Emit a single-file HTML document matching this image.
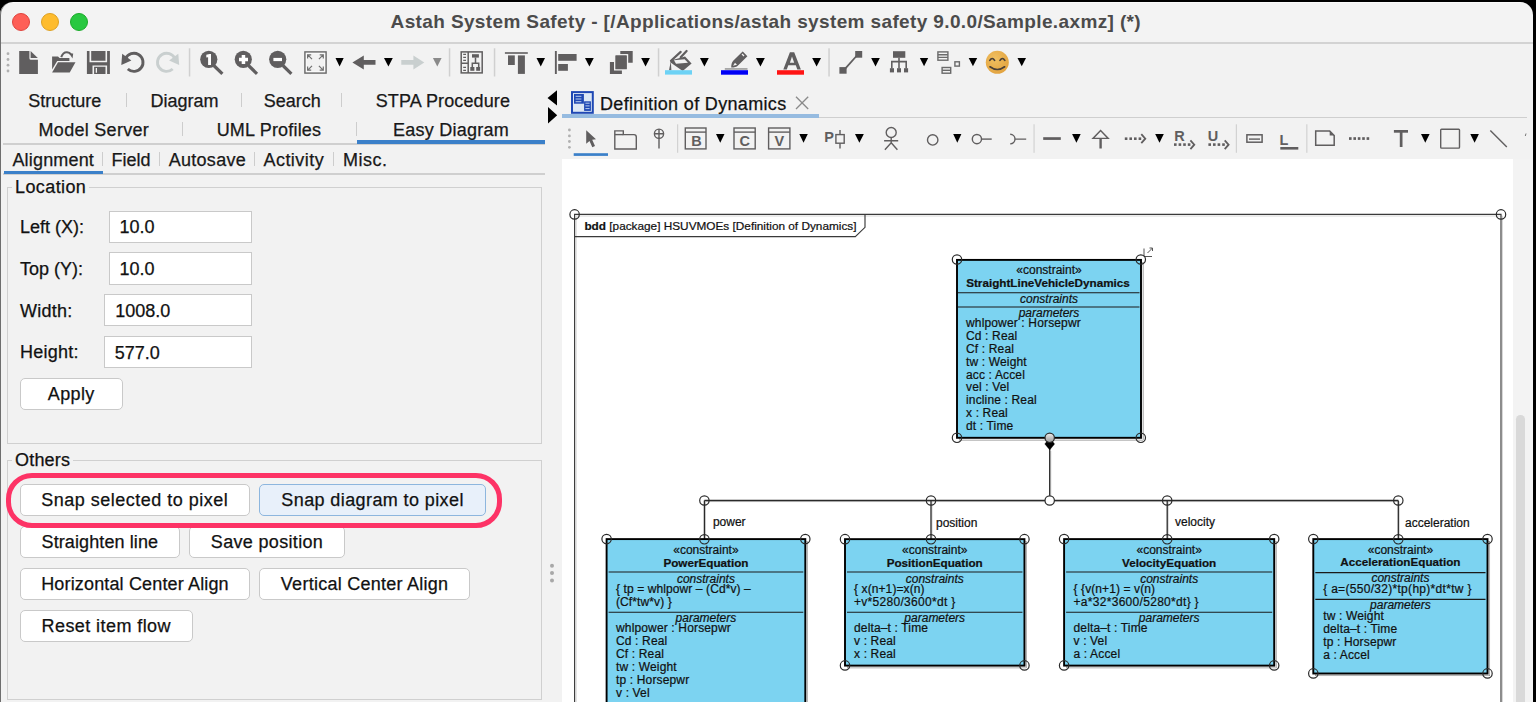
<!DOCTYPE html>
<html><head><meta charset="utf-8">
<style>
*{box-sizing:border-box;margin:0;padding:0}
html,body{width:1536px;height:702px;overflow:hidden;background:#000;font-family:"Liberation Sans",sans-serif;color:#1a1a1a}
.t18,.lbl,.btn,.glbl,.fld span{-webkit-text-stroke:0.25px #111}
.a{position:absolute}
html,body{background:#f2f2f2}
#win{position:absolute;left:0;top:0;width:1536px;height:702px}
#frame{position:absolute;left:0;top:2px;width:1533px;height:760px;border-radius:13px;box-shadow:0 0 0 60px #000;border-left:1px solid #6e6e6e;z-index:100;pointer-events:none}
.tl{position:absolute;width:18px;height:18px;border-radius:50%}
.t18{font-size:18px;white-space:nowrap;line-height:1}
.sep{position:absolute;width:1px;background:#cdcdcd}
.fld{position:absolute;background:#fff;border:1px solid #c9c9c9;height:33px;left:108px;width:144px}
.fld span{position:absolute;left:10px;top:6.6px;font-size:18px;line-height:1;color:#111}
.lbl{position:absolute;left:20px;font-size:18px;line-height:1;color:#111}
.btn{position:absolute;background:#fff;border:1px solid #c9c9c9;border-radius:5px;height:32px;font-size:18px;line-height:30px;text-align:center;color:#111;white-space:nowrap}
.grp{position:absolute;border:1px solid #d0d0d0}
.glbl{position:absolute;background:#f2f2f2;font-size:18px;line-height:1;padding:0 3px;color:#111}
svg{position:absolute;overflow:visible}
.dt{font-size:12px;line-height:1;white-space:pre;color:#111}
</style></head><body>
<div id="win">
  <div id="frame"></div>
  <div class="a" style="left:0;top:0;width:1536px;height:42px;background:#f3f3f3"></div>
  <div class="a" style="left:0;top:2px;width:1536px;height:1px;background:#fafafa"></div>
  <!-- title bar -->
  <div class="tl" style="left:12px;top:13px;background:#fe5f57;border:0.5px solid #e0443e"></div>
  <div class="tl" style="left:40.5px;top:13px;background:#febc2e;border:0.5px solid #dea123"></div>
  <div class="tl" style="left:69.5px;top:13px;background:#28c840;border:0.5px solid #1aab29"></div>
  <div class="a" style="left:390.6px;top:12px;font-size:19px;font-weight:bold;letter-spacing:0.37px;color:#4b4b4b;white-space:nowrap;line-height:1">Astah System Safety - [/Applications/astah system safety 9.0.0/Sample.axmz] (*)</div>
  <div class="a" style="left:0;top:42.2px;width:1533px;height:1.5px;background:#d3d3d3"></div>

  <!-- TOOLBAR placeholder -->
  <div id="toolbar"><svg class="a" style="left:0;top:0" width="1536" height="702" viewBox="0 0 1536 702">
 <g fill="#605e5f">
  <!-- grip -->
  <g fill="#b0b0b0"><circle cx="8" cy="53.7" r="1.4"/><circle cx="8" cy="59.5" r="1.4"/><circle cx="8" cy="65.2" r="1.4"/><circle cx="8" cy="71" r="1.4"/></g>
  <!-- new doc -->
  <path d="M19.2 51H29.4V58.2Q29.4 59.7 30.9 59.7H37.9V73.9H19.2Z"/>
  <path d="M30.6 51L37.8 58H30.6Z"/>
  <!-- open folder -->
  <path d="M52.1 56.4H58L59.6 58H69.4V60.9H57.2L52.1 69.5Z"/>
  <path d="M52.1 72.4L58 62.3H75.5L69.7 72.4Z"/>
  <path d="M61.2 57.2Q63 52 67 52.2Q69.8 52.4 71 54.5" fill="none" stroke="#605e5f" stroke-width="2"/>
  <path d="M69.3 53.6L73.2 53.4L72.5 58.6Z"/>
  <!-- save -->
  <path fill-rule="evenodd" d="M86.9 50.9H109.9V73.9H86.9Z M89.5 50.9V62.3H107.1V50.9H105.5V60.8H91.2V50.9Z M92.5 65.5V73.9H94.1V66.8H105.5V73.9H107.1V65.5Z M95.7 68.1H97V72.7H95.7Z"/>
  <!-- undo -->
  <path d="M127.8 69.05A9.1 9.1 0 1 0 125.6 58.6" fill="none" stroke="#605e5f" stroke-width="2.9"/>
  <path d="M122.2 53.8L121.3 65L131.4 60.4Z"/>
  <!-- redo -->
  <g fill="#c9cfcf"><path d="M172.7 69.05A9.1 9.1 0 1 1 174.9 58.6" fill="none" stroke="#c9cfcf" stroke-width="2.9"/>
  <path d="M178.3 53.8L179.2 65L169.1 60.4Z"/></g>
  <rect x="188.8" y="48.3" width="1.5" height="28.2" fill="#d0d0d0"/>
  <!-- zoom 1 -->
  <circle cx="208.8" cy="59.3" r="8.6"/><path d="M213.8 65.5L222.4 73.8" stroke="#605e5f" stroke-width="3.2"/>
  <path d="M206.3 54.7L209.6 54H211V65H208.1V57.2L206.3 57.6Z" fill="#fff"/>
  <!-- zoom + -->
  <circle cx="243.3" cy="59.3" r="8.6"/><path d="M248.5 65.5L257 73.8" stroke="#605e5f" stroke-width="3.2"/>
  <path d="M241.7 55H245.2V57.7H248V61.2H245.2V64H241.7V61.2H239V57.7H241.7Z" fill="#fff"/>
  <!-- zoom - -->
  <circle cx="277.7" cy="59.3" r="8.6"/><path d="M282.9 65.5L291.4 73.8" stroke="#605e5f" stroke-width="3.2"/>
  <rect x="273.4" y="57.9" width="8.6" height="3.2" fill="#fff"/>
  <!-- fit -->
  <rect x="304.9" y="51.9" width="21.2" height="21.2" fill="none" stroke="#686868" stroke-width="1.4"/>
  <rect x="306.5" y="53.5" width="18" height="18" fill="none" stroke="#fafafa" stroke-width="0.9"/>
  <g stroke="#707070" stroke-width="1.2" fill="none">
   <path d="M312 59.2L308 55.2M307.6 58.4V54.8H311.2"/><path d="M318.9 59.2L322.9 55.2M319.7 54.8H323.3V58.4"/>
   <path d="M312 65.8L308 69.8M307.6 66.6V70.2H311.2"/><path d="M318.9 65.8L322.9 69.8M323.3 66.6V70.2H319.7"/>
  </g>
 </g>
 <g fill="#000">
  <path d="M335.5 58.1H343.7L339.6 66.6Z"/>
  <path d="M384 58.1H392.8L388.4 66.5Z"/>
 </g>
 <g fill="#605e5f">
  <path d="M352.4 62.4L363.8 55.4V60H375.5V64.8H363.8V69.4Z"/>
  <path d="M424.3 62.4L413.4 55.4V60H401.3V64.8H413.4V69.4Z" fill="#c9cfcf"/>
  <path d="M432.9 58.1H441.6L437.3 66.6Z" fill="#8a8a8a"/>
  <rect x="448.8" y="48.3" width="1.5" height="28.2" fill="#d0d0d0"/>
  <!-- structure icon -->
  <g fill="none" stroke="#605e5f" stroke-width="1.5">
   <rect x="461.2" y="51.9" width="21" height="21"/>
   <path d="M468.2 51.9V72.9M461.2 63.3H468.2"/>
   <path d="M463.2 54.4H466M463.2 57.4H466M463.2 60.4H466M463.2 67.4H466M463.2 70.4H466" stroke-width="1.3"/>
   <path d="M475.5 57.6V63.3M472.3 67V63.3H478.7V67"/>
  </g>
  <rect x="472" y="54.2" width="6.9" height="3.4"/>
  <rect x="470.3" y="67" width="4.1" height="3.8"/><rect x="476.2" y="67" width="3.9" height="3.8"/>
  <rect x="493.8" y="48.3" width="1.5" height="28.2" fill="#d0d0d0"/>
  <!-- align top -->
  <rect x="504.9" y="52.2" width="22.9" height="1.6"/>
  <rect x="508" y="55.4" width="6.8" height="9.6"/>
  <rect x="517.9" y="55.4" width="7" height="18.5"/>
  <!-- align left -->
  <rect x="554.9" y="51" width="1.9" height="23"/>
  <rect x="558.2" y="54" width="18.4" height="6.8"/>
  <rect x="558.2" y="64" width="9.7" height="6.8"/>
  <!-- layers -->
  <path d="M620.3 51H632.7V62.7H627.8V54.6H620.3Z"/>
  <path d="M609.9 62H614.3V70.1H621.9V74H609.9Z"/>
  <rect x="614" y="54.1" width="14.2" height="16.4" fill="#f2f2f2"/><rect x="615.3" y="55.35" width="11.6" height="13.9" rx="0.6"/>
  <rect x="657.8" y="48.3" width="1.5" height="28.2" fill="#d0d0d0"/>
 </g>
 <g fill="#000">
  <path d="M536.5 58H545L540.75 66.6Z"/>
  <path d="M585 58H593.75L589.4 66.6Z"/>
  <path d="M641.2 58H649.9L645.55 66.6Z"/>
  <path d="M700 58.1H708.8L704.4 66.6Z"/>
  <path d="M756 58.1H764.8L760.4 66.6Z"/>
  <path d="M812.2 58.1H821L816.6 66.6Z"/>
  <path d="M871.2 58.1H879.8L875.5 66.6Z"/>
  <path d="M919.9 58.1H928.2L924.05 66.3Z"/>
  <path d="M968.7 58.1H977.2L972.95 66.3Z"/>
  <path d="M1017.5 58.1H1026L1021.75 66.3Z"/>
 </g>
 <g fill="#605e5f">
  <!-- bucket -->
  <path d="M680.7 51.9L671 60.8M686.6 51L680.7 57.3" stroke="#605e5f" stroke-width="2.2" stroke-linecap="round"/>
  <path d="M670.8 60.6L685 56.6L691.6 63.6L682.7 71L670.6 62.4Z"/>
  <path d="M674 60.3L684.6 59.2L688 62.8L676 63.8Z" fill="#f2f2f2"/>
  <path d="M670.8 61.2L669 70.3H671.4Z"/>
  <rect x="665" y="70.2" width="27" height="4.4" fill="#6dd2f5"/>
  <!-- pen -->
  <path d="M743.3 52.1L747.4 56.2L738 65.6Q736 67.6 731.2 67.6Q731.2 62.8 733.2 60.8L742.6 51.4Z"/>
  <path d="M735 62.8L737 64.8L733 65.8Z" fill="#f2f2f2"/>
  <path d="M742 54L744 56" stroke="#f2f2f2" stroke-width="1.2"/>
  <rect x="724.8" y="68.3" width="22.7" height="1.3" fill="#888"/>
  <rect x="721" y="70.2" width="27" height="4.5" fill="#0000f5"/>
  <!-- A -->
  <path d="M783.3 69.4L789.9 52.2H794.2L800.9 69.4H797.3L795.8 65.3H788.3L786.8 69.4Z M789.9 62.7H794.2L792 56.5Z" fill-rule="evenodd"/>
  <rect x="777" y="70.2" width="27" height="4.5" fill="#ff1414"/>
  <rect x="828.3" y="48.3" width="1.5" height="28.2" fill="#d0d0d0"/>
  <!-- connector -->
  <rect x="855.2" y="51" width="7" height="6.7"/>
  <rect x="839.4" y="67.1" width="7.2" height="6.6"/>
  <path d="M845 68.8L856.5 56" stroke="#605e5f" stroke-width="1.8"/>
  <!-- tree -->
  <rect x="893" y="51.2" width="12.3" height="6.6"/>
  <path d="M899 57.8V68.6M891.8 68.6V61.6H906.2V68.6" fill="none" stroke="#605e5f" stroke-width="1.6"/>
  <rect x="889.9" y="68.2" width="4.1" height="4.2"/><rect x="897" y="68.2" width="4" height="4.2"/><rect x="904" y="68.2" width="4.1" height="4.2"/>
  <!-- boxes -->
  <g fill="none" stroke="#6a6a6a" stroke-width="1.4">
   <rect x="937.9" y="51.9" width="10" height="8.3"/><path d="M937.9 54.7H947.9M937.9 57.4H947.9"/>
   <rect x="954.9" y="61.8" width="4.5" height="4.3"/>
   <rect x="942.1" y="67.5" width="8.6" height="5.7"/><path d="M942.1 70.3H950.7"/>
  </g>
 </g>
 <!-- smiley -->
 <defs><radialGradient id="sg" cx="0.4" cy="0.35" r="0.7"><stop offset="0" stop-color="#f0c061"/><stop offset="1" stop-color="#e2a23e"/></radialGradient></defs>
 <circle cx="997.3" cy="62.3" r="11.5" fill="url(#sg)"/>
 <g fill="none" stroke="#4a4038" stroke-width="1.7" stroke-linecap="round">
  <path d="M989.8 60.4Q992.2 56.6 994.6 60.4"/><path d="M1000 60.4Q1002.4 56.6 1004.8 60.4"/>
  <path d="M990 66.8Q997.3 72.2 1004.6 66.8"/>
 </g>
</svg>
</div>

  <!-- left tabs -->
  <div id="lefttabs">
  <div class="t18 a" style="left:28.3px;top:92.1px">Structure</div>
  <div class="sep" style="left:126px;top:93px;height:13.5px"></div>
  <div class="t18 a" style="left:150.6px;top:92.1px">Diagram</div>
  <div class="sep" style="left:241px;top:93px;height:13.5px"></div>
  <div class="t18 a" style="left:263.8px;top:92.1px">Search</div>
  <div class="sep" style="left:341.3px;top:93px;height:13.5px"></div>
  <div class="t18 a" style="left:375.7px;top:92.1px;letter-spacing:0.12px">STPA Procedure</div>

  <div class="t18 a" style="left:38.6px;top:120.6px;letter-spacing:0.28px">Model Server</div>
  <div class="sep" style="left:182px;top:122px;height:13.5px"></div>
  <div class="t18 a" style="left:216.7px;top:120.6px;letter-spacing:0.18px">UML Profiles</div>
  <div class="sep" style="left:355.5px;top:122px;height:13.5px"></div>
  <div class="t18 a" style="left:393px;top:120.6px;letter-spacing:0.25px">Easy Diagram</div>
  <div class="a" style="left:3px;top:143.3px;width:542px;height:1.4px;background:#cfcfcf"></div>
  <div class="a" style="left:357px;top:140.2px;width:188px;height:4px;background:#3b80c9"></div>

  <div class="t18 a" style="left:12.4px;top:150.6px;letter-spacing:0.18px">Alignment</div>
  <div class="sep" style="left:102px;top:152px;height:13.5px"></div>
  <div class="t18 a" style="left:111.5px;top:150.6px">Field</div>
  <div class="sep" style="left:159px;top:152px;height:13.5px"></div>
  <div class="t18 a" style="left:168.8px;top:150.6px;letter-spacing:0.26px">Autosave</div>
  <div class="sep" style="left:253.8px;top:152px;height:13.5px"></div>
  <div class="t18 a" style="left:263.5px;top:150.6px;letter-spacing:0.45px">Activity</div>
  <div class="sep" style="left:332.8px;top:152px;height:13.5px"></div>
  <div class="t18 a" style="left:343px;top:150.6px;letter-spacing:0.5px">Misc.</div>
  <div class="a" style="left:3px;top:173.3px;width:542px;height:1.4px;background:#cfcfcf"></div>
  <div class="a" style="left:3.6px;top:170.7px;width:99.4px;height:3.6px;background:#3b80c9"></div>
  <!-- arrows left/right -->
  <svg class="a" style="left:0;top:0" width="600" height="200"><path d="M547.5 98L557 90.2V105.6Z M548 107V123.5L557.2 115.2Z" fill="#000"/></svg>
</div>
<div id="leftcontent">
  <div class="grp" style="left:7px;top:186.5px;width:535px;height:257.8px"></div>
  <div class="glbl" style="left:12px;top:177.8px;letter-spacing:0.4px">Location</div>
  <div class="lbl" style="top:217.8px">Left (X):</div>
  <div class="fld" style="left:108.6px;top:210.9px;width:143.2px;height:32.4px"><span>10.0</span></div>
  <div class="lbl" style="top:259.5px">Top (Y):</div>
  <div class="fld" style="left:108.6px;top:252.3px;width:143.2px;height:32.4px"><span>10.0</span></div>
  <div class="lbl" style="top:301.5px;letter-spacing:0.25px">Width:</div>
  <div class="fld" style="left:104.2px;top:294.2px;width:147.6px;height:32.2px"><span>1008.0</span></div>
  <div class="lbl" style="top:343px;letter-spacing:0.25px">Height:</div>
  <div class="fld" style="left:104.2px;top:336px;width:147.6px;height:32.2px"><span style="left:9.6px">577.0</span></div>
  <div class="btn" style="left:20px;top:377.7px;width:102.5px;letter-spacing:0.4px">Apply</div>

  <div class="grp" style="left:7px;top:459.5px;width:535px;height:240.5px"></div>
  <div class="glbl" style="left:12px;top:451px;letter-spacing:0.2px">Others</div>
  <div class="btn" style="left:20px;top:484px;width:229.5px;letter-spacing:0.5px">Snap selected to pixel</div>
  <div class="btn" style="left:259.2px;top:484px;width:226.8px;background:#e8f0fa;border-color:#8db6de;letter-spacing:0.4px">Snap diagram to pixel</div>
  <div class="btn" style="left:20px;top:526px;width:159.7px;letter-spacing:0.1px">Straighten line</div>
  <div class="btn" style="left:189.4px;top:526px;width:155.3px;letter-spacing:0.33px">Save position</div>
  <div class="btn" style="left:20px;top:568px;width:230px;letter-spacing:0.15px">Horizontal Center Align</div>
  <div class="btn" style="left:259.4px;top:568px;width:210.3px;letter-spacing:0.25px">Vertical Center Align</div>
  <div class="btn" style="left:20px;top:610px;width:172.5px;letter-spacing:0.42px">Reset item flow</div>
  <div class="a" style="left:6.4px;top:472.8px;width:495.8px;height:55.2px;border:5.6px solid #fd3366;border-radius:26px"></div>
  <svg class="a" style="left:0;top:0" width="600" height="702"><g fill="#a8a8a8"><circle cx="552" cy="565.8" r="2"/><circle cx="552" cy="573.1" r="2"/><circle cx="552" cy="580.4" r="2"/></g></svg>
</div>


  <!-- right -->
  <div id="right">
  <!-- tab -->
  <div class="a" style="left:562px;top:114.4px;width:257.3px;height:3.9px;background:#96bbe0"></div>
  <div class="a" style="left:819px;top:116.9px;width:708px;height:1.6px;background:#cfcfcf"></div>
  <div class="t18 a" style="left:600px;top:94.7px;letter-spacing:0.34px;color:#111">Definition of Dynamics</div>
  <!-- canvas -->
  <div class="a" style="left:562.4px;top:158.7px;width:950.8px;height:544px;background:#fff"></div>
  <div class="a" style="left:1513.2px;top:158.7px;width:20px;height:544px;background:#f3f3f3"></div>
  <div class="a" style="left:1516px;top:415px;width:8.6px;height:300px;background:#d9d9d9;border-radius:4.3px"></div>
  <svg class="a" style="left:0;top:0" width="1536" height="702" viewBox="0 0 1536 702">
   <!-- tab icon -->
   <rect x="572" y="92.1" width="20.8" height="20.7" fill="#dde8f5" stroke="#1f48b4" stroke-width="2"/>
   <rect x="574" y="94" width="9.9" height="9.7" fill="#1f48b4"/>
   <rect x="584.1" y="101.3" width="6.8" height="9.6" fill="#1f48b4"/>
   <path d="M575.6 96.3H581.4M575.6 99H581.4M575.6 101.7H581.4M585.4 103.2H589.6M585.4 105.9H589.6M585.4 108.6H589.6" stroke="#b9cdee" stroke-width="1"/>
   <!-- close x -->
   <path d="M796 96.8L808.2 109M808.2 96.8L796 109" stroke="#8a8a8a" stroke-width="1.3"/>
   <!-- grip -->
   <g fill="#b0b0b0"><circle cx="569.4" cy="130" r="1.4"/><circle cx="569.4" cy="135.9" r="1.4"/><circle cx="569.4" cy="141.5" r="1.4"/><circle cx="569.4" cy="147.3" r="1.4"/></g>
   <g fill="#605e5f">
    <!-- select arrow -->
    <path d="M586.2 130.2L596 139.2L592.2 139.8L595 146L592.3 147.3L589.5 141L586.2 143.8Z"/>
    <rect x="573.7" y="153.2" width="34.3" height="2.7" fill="#3b80c9"/>
   </g>
   <g fill="none" stroke="#605e5f" stroke-width="1.4">
    <!-- folder -->
    <path d="M614.8 149V130.9H623.3V134.6H634Q636.3 134.6 636.3 137V149Z"/>
    <path d="M614.8 134.6H623.3"/>
    <!-- pin -->
    <circle cx="659" cy="133.7" r="4.6"/><path d="M654.4 133.7H663.6M659 129.1V148.5"/>
    <!-- B C V boxes -->
    <rect x="685.3" y="128" width="20.7" height="20.9"/><path d="M685.3 132.1H706"/>
    <rect x="734" y="128" width="21.2" height="20.9"/><path d="M734 132.1H755.2"/>
    <rect x="768.6" y="128" width="21.3" height="20.9"/><path d="M768.6 132.1H789.9"/>
    <!-- P port -->
    <rect x="835.9" y="134.6" width="8.3" height="8.6"/><path d="M840 130V134.6M840 143.2V148.5"/>
    <!-- actor -->
    <circle cx="891.2" cy="132.5" r="5"/><path d="M884.1 140.7H898.2M891.2 137.5V142.7L884.9 149.7M891.2 142.7L897.4 149.7"/>
    <!-- circle -->
    <circle cx="932.7" cy="139.9" r="5.2"/>
    <!-- lollipop -->
    <circle cx="976.9" cy="139.1" r="4.6"/><path d="M981.5 139.1H991.7"/>
    <!-- socket -->
    <path d="M1010.2 134.3A4.8 4.8 0 0 1 1010.2 143.9M1015 139.1H1026.2"/>
    <!-- generalization -->
    <path d="M1100.6 130.5L1093 138.4H1108.2Z"/>
    <path d="M1100.6 138.4V148.5" stroke-width="2.4"/>
    <!-- chevrons -->
    <path d="M1141.3 134.2L1145.3 138.7L1141.3 143.2" stroke-width="1.8"/>
    <path d="M1190.4 140.3L1194.3 144.7L1190.4 149.1" stroke-width="1.8"/>
    <path d="M1224.7 140.3L1228.6 144.7L1224.7 149.1" stroke-width="1.8"/>
    <!-- rect -->
    <rect x="1246.9" y="134.8" width="15.2" height="7.4" stroke-width="1.5"/><path d="M1249 139.1H1260"/>
    <!-- note -->
    <path d="M1315.7 130.9H1329.7L1334.2 135.6V145.3H1315.7Z" stroke-width="1.5"/>
    <!-- big rect -->
    <rect x="1440.7" y="129.3" width="18.8" height="18.8" rx="0.8" stroke-width="1.4"/>
    <path d="M1490.3 130.4L1506.8 147" stroke-width="1.4"/>
   </g>
   <g fill="#605e5f">
    <path d="M1329.7 130.9V135.6H1334.2Z"/>
    <!-- separators -->
    <rect x="677.1" y="124.3" width="1.1" height="28.5" fill="#cfcfcf"/>
    <rect x="1033.5" y="124.3" width="1.1" height="28.5" fill="#cfcfcf"/>
    <rect x="1235.8" y="124.3" width="1.1" height="28.5" fill="#cfcfcf"/>
    <rect x="1306.3" y="124.3" width="1.1" height="28.5" fill="#cfcfcf"/>
    <!-- letters -->
    <text x="691.2" y="146.3" font-size="14.5" font-weight="bold" font-family="Liberation Sans">B</text>
    <text x="739.5" y="146.3" font-size="14.5" font-weight="bold" font-family="Liberation Sans">C</text>
    <text x="774.5" y="146.3" font-size="14.5" font-weight="bold" font-family="Liberation Sans">V</text>
    <text x="824.2" y="141.6" font-size="14.5" font-weight="bold" font-family="Liberation Sans">P</text>
    <text x="1174.2" y="141.3" font-size="14.5" font-weight="bold" font-family="Liberation Sans">R</text>
    <text x="1207.8" y="141.3" font-size="14.5" font-weight="bold" font-family="Liberation Sans">U</text>
    <text x="1279.6" y="145.2" font-size="14.5" font-weight="bold" font-family="Liberation Sans">L</text>
    <rect x="1280.3" y="147" width="18" height="2.6"/>
    <!-- line icon -->
    <rect x="1043.2" y="137.2" width="17.6" height="2.7"/>
    <!-- dotted arrow dashes -->
    <g><rect x="1124.8" y="137.4" width="2.6" height="2.6"/><rect x="1129.4" y="137.4" width="2.6" height="2.6"/><rect x="1134" y="137.4" width="2.6" height="2.6"/><rect x="1138.6" y="137.4" width="2.6" height="2.6"/></g>
    <g><rect x="1174" y="143.3" width="2.6" height="2.6"/><rect x="1178.6" y="143.3" width="2.6" height="2.6"/><rect x="1183.2" y="143.3" width="2.6" height="2.6"/><rect x="1187.8" y="143.3" width="2.6" height="2.6"/></g>
    <g><rect x="1208.4" y="143.3" width="2.6" height="2.6"/><rect x="1213" y="143.3" width="2.6" height="2.6"/><rect x="1217.6" y="143.3" width="2.6" height="2.6"/><rect x="1222.2" y="143.3" width="2.6" height="2.6"/></g>
    <g><rect x="1349" y="137.2" width="2.6" height="2.7"/><rect x="1353.4" y="137.2" width="2.6" height="2.7"/><rect x="1357.8" y="137.2" width="2.6" height="2.7"/><rect x="1362.2" y="137.2" width="2.6" height="2.7"/><rect x="1366.6" y="137.2" width="2.6" height="2.7"/></g>
    <!-- T -->
    <rect x="1393.9" y="130" width="14.1" height="2.7"/><rect x="1399.8" y="130" width="2.7" height="17"/>
   </g>
   <g fill="#000">
    <path d="M716 134H724.5L720.25 142.7Z"/>
    <path d="M799.3 134H807.8L803.55 142.7Z"/>
    <path d="M855 134H863.8L859.4 142.7Z"/>
    <path d="M953.2 134H961.4L957.3 142.7Z"/>
    <path d="M1072.1 134H1080.7L1076.4 142.7Z"/>
    <path d="M1155.2 134H1163.8L1159.5 142.7Z"/>
    <path d="M1421 134H1429.6L1425.3 142.7Z"/>
    <path d="M1470.3 134H1478.9L1474.6 142.7Z"/>
   </g>
   <path d="M1526 133.5L1525.3 136" stroke="#777" stroke-width="1"/>
  </svg>
  <div id="diagram"><svg class="a" style="left:0;top:0" width="1536" height="702" viewBox="0 0 1536 702" font-family="Liberation Sans" font-size="12" fill="#111" stroke="#111" stroke-width="0.22">
<g fill="none" stroke="#d8d8d8" stroke-width="1"><path d="M575.6 216H1502.5M1502.5 216V702M576.2 216V702"/></g>
<g fill="none" stroke="#3a3a3a" stroke-width="1.15">
<path d="M574.6 702V214.4H1501V702"/>
<path d="M574.6 236.6H855.3L865 227.3V214.4"/>
</g>
<text x="584.4" y="229.6" font-size="11.8"><tspan font-weight="bold">bdd</tspan> [package] HSUVMOEs [Definition of Dynamics]</text>
<rect x="959.4" y="262.29999999999995" width="184" height="177.90000000000003" fill="#e2e2e2"/>
<rect x="957" y="259.9" width="184" height="177.90000000000003" fill="#7cd3f1" stroke="#000" stroke-width="1.9"/>
<path d="M958 292.7H1139.5M958 307H1139.5" stroke="#1a1a1a" stroke-width="1.1"/>
<text x="1049" y="274.4" text-anchor="middle">«constraint»</text>
<text x="1048" y="286.6" text-anchor="middle" font-weight="bold" font-size="11.7">StraightLineVehicleDynamics</text>
<text x="1049" y="303" text-anchor="middle" font-style="italic">constraints</text>
<text x="1049" y="317" text-anchor="middle" font-style="italic">parameters</text>
<text x="966" y="327.00" letter-spacing="0.15">whlpower : Horsepwr</text>
<text x="966" y="339.88" letter-spacing="0.15">Cd : Real</text>
<text x="966" y="352.75" letter-spacing="0.15">Cf : Real</text>
<text x="966" y="365.62" letter-spacing="0.15">tw : Weight</text>
<text x="966" y="378.50" letter-spacing="0.15">acc : Accel</text>
<text x="966" y="391.38" letter-spacing="0.15">vel : Vel</text>
<text x="966" y="404.25" letter-spacing="0.15">incline : Real</text>
<text x="966" y="417.12" letter-spacing="0.15">x : Real</text>
<text x="966" y="430.00" letter-spacing="0.15">dt : Time</text>
<g fill="none" stroke="#555" stroke-width="1"><path d="M1144 248.5V256.5H1152"/><path d="M1147.5 253L1152.5 248M1149.5 248H1152.5V251"/></g>
<circle cx="957" cy="259.5" r="4.7" fill="none" stroke="#2a2a2a" stroke-width="1.2"/>
<circle cx="1140.8" cy="259.5" r="4.7" fill="none" stroke="#2a2a2a" stroke-width="1.2"/>
<circle cx="957" cy="437.8" r="4.7" fill="none" stroke="#2a2a2a" stroke-width="1.2"/>
<circle cx="1140.8" cy="437.8" r="4.7" fill="none" stroke="#2a2a2a" stroke-width="1.2"/>
<g stroke="#d0d0d0" stroke-width="1" fill="none"><path d="M705.4 501.6H1399.3M705.5 501.5V539M932 501.5V539M1168.2 501.5V539M1399.3 501.5V539M1050.8 451V500"/></g>
<g stroke="#2a2a2a" stroke-width="1.3" fill="none"><path d="M704.4 500.5H1398.3M704.4 500.5V539.4M931 500.5V539.4M1167.2 500.5V539.4M1398.3 500.5V539.4M1049.7 449V500.5"/></g>
<path d="M1049.7 437.8L1054.7 443.9L1049.7 450L1044.7 443.9Z" fill="#000"/>
<defs><linearGradient id="hg" x1="0" y1="0" x2="0" y2="1"><stop offset="0" stop-color="#eee"/><stop offset="1" stop-color="#999"/></linearGradient></defs>
<circle cx="1049.7" cy="437.8" r="4.7" fill="url(#hg)" stroke="#2a2a2a" stroke-width="1.2"/>
<circle cx="704.4" cy="500.5" r="4.7" fill="none" stroke="#2a2a2a" stroke-width="1.2"/>
<circle cx="931" cy="500.5" r="4.7" fill="none" stroke="#2a2a2a" stroke-width="1.2"/>
<circle cx="1049.7" cy="500.5" r="4.7" fill="#fff" stroke="#2a2a2a" stroke-width="1.2"/>
<circle cx="1167.2" cy="500.5" r="4.7" fill="none" stroke="#2a2a2a" stroke-width="1.2"/>
<circle cx="1398.3" cy="500.5" r="4.7" fill="none" stroke="#2a2a2a" stroke-width="1.2"/>
<text x="712.9" y="526">power</text>
<text x="936" y="526.5">position</text>
<text x="1175" y="525.5">velocity</text>
<text x="1405" y="526.5">acceleration</text>
<rect x="609.0" y="541.5" width="198.69999999999993" height="220.89999999999998" fill="#e2e2e2"/>
<rect x="606.6" y="539.1" width="198.69999999999993" height="220.89999999999998" fill="#7cd3f1" stroke="#000" stroke-width="1.9"/>
<path d="M608.6 572H803.3" stroke="#1a1a1a" stroke-width="1.1"/>
<path d="M608.6 612.3H803.3" stroke="#1a1a1a" stroke-width="1.1"/>
<text x="705.95" y="553.5" text-anchor="middle">«constraint»</text>
<text x="705.95" y="566.5" text-anchor="middle" font-weight="bold" font-size="11.7">PowerEquation</text>
<text x="705.95" y="582.5" text-anchor="middle" font-style="italic">constraints</text>
<text x="616" y="593.1" letter-spacing="0.1">{ tp = whlpowr – (Cd*v) –</text>
<text x="616" y="606.0" letter-spacing="0.1">(Cf*tw*v) }</text>
<text x="705.95" y="621.9" text-anchor="middle" font-style="italic">parameters</text>
<text x="616" y="632.2" letter-spacing="0.15">whlpower : Horsepwr</text>
<text x="616" y="645.2" letter-spacing="0.15">Cd : Real</text>
<text x="616" y="658.2" letter-spacing="0.15">Cf : Real</text>
<text x="616" y="671.2" letter-spacing="0.15">tw : Weight</text>
<text x="616" y="684.2" letter-spacing="0.15">tp : Horsepwr</text>
<text x="616" y="697.2" letter-spacing="0.15">v : Vel</text>
<rect x="847.4" y="541.55" width="179.45000000000005" height="126.45000000000005" fill="#e2e2e2"/>
<rect x="845" y="539.15" width="179.45000000000005" height="126.45000000000005" fill="#7cd3f1" stroke="#000" stroke-width="1.9"/>
<path d="M847 572H1022.45" stroke="#1a1a1a" stroke-width="1.1"/>
<path d="M847 612.3H1022.45" stroke="#1a1a1a" stroke-width="1.1"/>
<text x="934.725" y="553.5" text-anchor="middle">«constraint»</text>
<text x="934.725" y="566.5" text-anchor="middle" font-weight="bold" font-size="11.7">PositionEquation</text>
<text x="934.725" y="582.5" text-anchor="middle" font-style="italic">constraints</text>
<text x="854" y="593.1" letter-spacing="0.1">{ x(n+1)=x(n)</text>
<text x="854" y="606.0" letter-spacing="0.3">+v*5280/3600*dt }</text>
<text x="934.725" y="621.9" text-anchor="middle" font-style="italic">parameters</text>
<text x="854" y="632.2" letter-spacing="0.15">delta–t : Time</text>
<text x="854" y="645.2" letter-spacing="0.15">v : Real</text>
<text x="854" y="658.2" letter-spacing="0.15">x : Real</text>
<rect x="1066.5" y="541.5" width="210.10000000000014" height="126.5" fill="#e2e2e2"/>
<rect x="1064.1" y="539.1" width="210.10000000000014" height="126.5" fill="#7cd3f1" stroke="#000" stroke-width="1.9"/>
<path d="M1066.1 572H1272.2" stroke="#1a1a1a" stroke-width="1.1"/>
<path d="M1066.1 612.3H1272.2" stroke="#1a1a1a" stroke-width="1.1"/>
<text x="1169.15" y="553.5" text-anchor="middle">«constraint»</text>
<text x="1169.15" y="566.5" text-anchor="middle" font-weight="bold" font-size="11.7">VelocityEquation</text>
<text x="1169.15" y="582.5" text-anchor="middle" font-style="italic">constraints</text>
<text x="1073.5" y="593.1" letter-spacing="0.1">{ {v(n+1) = v(n)</text>
<text x="1073.5" y="606.0" letter-spacing="0.3">+a*32*3600/5280*dt} }</text>
<text x="1169.15" y="621.9" text-anchor="middle" font-style="italic">parameters</text>
<text x="1073.5" y="632.2" letter-spacing="0.15">delta–t : Time</text>
<text x="1073.5" y="645.2" letter-spacing="0.15">v : Vel</text>
<text x="1073.5" y="658.2" letter-spacing="0.15">a : Accel</text>
<rect x="1315.7" y="541.5" width="174.20000000000005" height="134.39999999999998" fill="#e2e2e2"/>
<rect x="1313.3" y="539.1" width="174.20000000000005" height="134.39999999999998" fill="#7cd3f1" stroke="#000" stroke-width="1.9"/>
<path d="M1315.3 572.6H1485.5" stroke="#1a1a1a" stroke-width="1.1"/>
<path d="M1315.3 599.4H1485.5" stroke="#1a1a1a" stroke-width="1.1"/>
<text x="1400.4" y="554" text-anchor="middle">«constraint»</text>
<text x="1400.4" y="566.4" text-anchor="middle" font-weight="bold" font-size="11.7">AccelerationEquation</text>
<text x="1400.4" y="582.0" text-anchor="middle" font-style="italic">constraints</text>
<text x="1323.2" y="593.1999999999999" letter-spacing="0.3">{ a=(550/32)*tp(hp)*dt*tw }</text>
<text x="1400.4" y="608.5" text-anchor="middle" font-style="italic">parameters</text>
<text x="1323.2" y="620.0" letter-spacing="0.15">tw : Weight</text>
<text x="1323.2" y="633.1" letter-spacing="0.15">delta–t : Time</text>
<text x="1323.2" y="646.3000000000001" letter-spacing="0.15">tp : Horsepwr</text>
<text x="1323.2" y="659.4000000000001" letter-spacing="0.15">a : Accel</text>
<circle cx="606.6" cy="539.1" r="4.7" fill="none" stroke="#2a2a2a" stroke-width="1.2"/>
<circle cx="805.3" cy="539.1" r="4.7" fill="none" stroke="#2a2a2a" stroke-width="1.2"/>
<circle cx="845" cy="539.15" r="4.7" fill="none" stroke="#2a2a2a" stroke-width="1.2"/>
<circle cx="1024.45" cy="539.15" r="4.7" fill="none" stroke="#2a2a2a" stroke-width="1.2"/>
<circle cx="845" cy="665.4" r="4.7" fill="none" stroke="#2a2a2a" stroke-width="1.2"/>
<circle cx="1024.45" cy="665.4" r="4.7" fill="none" stroke="#2a2a2a" stroke-width="1.2"/>
<circle cx="1064.1" cy="539.1" r="4.7" fill="none" stroke="#2a2a2a" stroke-width="1.2"/>
<circle cx="1274.2" cy="539.1" r="4.7" fill="none" stroke="#2a2a2a" stroke-width="1.2"/>
<circle cx="1064.1" cy="665.4" r="4.7" fill="none" stroke="#2a2a2a" stroke-width="1.2"/>
<circle cx="1274.2" cy="665.4" r="4.7" fill="none" stroke="#2a2a2a" stroke-width="1.2"/>
<circle cx="1313.3" cy="539.1" r="4.7" fill="none" stroke="#2a2a2a" stroke-width="1.2"/>
<circle cx="1487.5" cy="539.1" r="4.7" fill="none" stroke="#2a2a2a" stroke-width="1.2"/>
<circle cx="1313.3" cy="673.4" r="4.7" fill="none" stroke="#2a2a2a" stroke-width="1.2"/>
<circle cx="1487.5" cy="673.4" r="4.7" fill="none" stroke="#2a2a2a" stroke-width="1.2"/>
<circle cx="704.4" cy="539.3" r="4.7" fill="none" stroke="#2a2a2a" stroke-width="1.2"/>
<circle cx="931" cy="539.3" r="4.7" fill="none" stroke="#2a2a2a" stroke-width="1.2"/>
<circle cx="1167.2" cy="539.3" r="4.7" fill="none" stroke="#2a2a2a" stroke-width="1.2"/>
<circle cx="1398.3" cy="539.3" r="4.7" fill="none" stroke="#2a2a2a" stroke-width="1.2"/>
<circle cx="574.6" cy="214.4" r="4.7" fill="none" stroke="#2a2a2a" stroke-width="1.2"/>
<circle cx="1501" cy="214.4" r="4.7" fill="none" stroke="#2a2a2a" stroke-width="1.2"/>
</svg></div>
</div>

</div>
</body></html>
